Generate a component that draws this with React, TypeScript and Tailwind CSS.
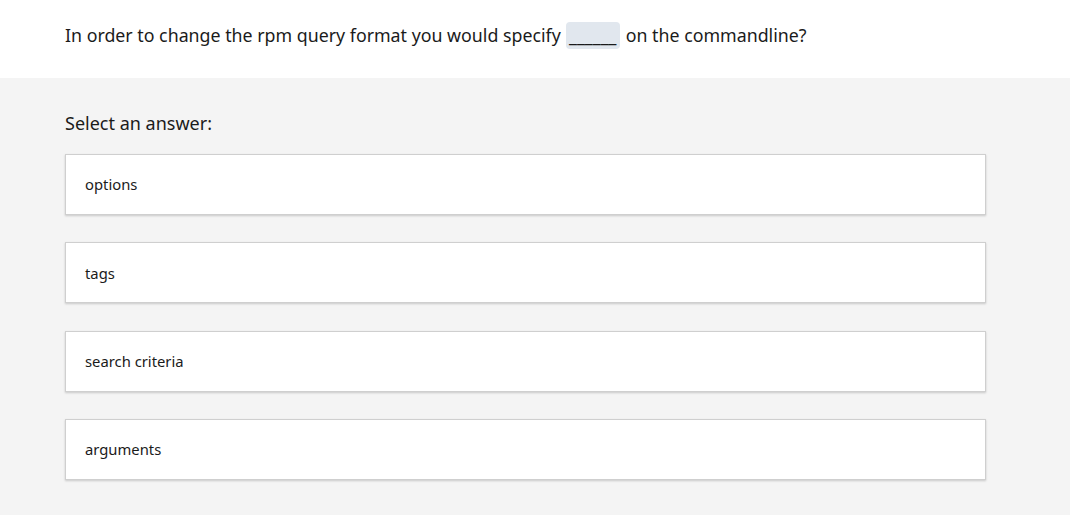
import React from 'react';

const ANSWERS = ['options', 'tags', 'search criteria', 'arguments'];

export default function App() {
  return (
    <div className="min-h-[515px] bg-[#f4f4f4] text-[#1b1b1b]" style={{ fontFamily: '"Noto Sans", "Open Sans", sans-serif' }}>
      <div className="bg-white h-[78px] flex items-center pl-[65px] pb-[7px]">
        <p className="text-[17.8px] leading-none flex items-center">
          In order to change the rpm query format you would specify
          <span className="inline-flex items-center justify-center ml-[5px] mr-[6px] w-[54px] h-[27px] rounded-[4px] bg-[#e1e7ee] text-[#1b1b1b]">______</span>
          on the commandline?
        </p>
      </div>
      <div className="pl-[65px] pt-[33px] pb-[36px]">
        <p className="text-[18px] leading-[24px] mb-[19px]">Select an answer:</p>
        <div className="flex flex-col gap-[27.33px] w-[921px]">
          {ANSWERS.map((a) => (
            <div
              key={a}
              className="h-[61px] bg-white border border-[#cfcfcf] shadow-[0_1px_2px_rgba(0,0,0,0.18)] flex items-center px-[19px] text-[14.8px]"
            >
              {a}
            </div>
          ))}
        </div>
      </div>
    </div>
  );
}
